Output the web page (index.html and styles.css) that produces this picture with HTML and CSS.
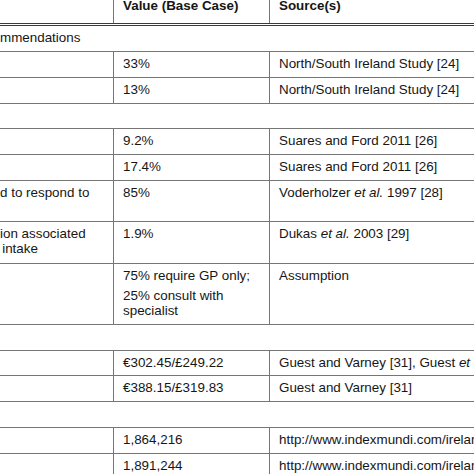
FILE: index.html
```html
<!DOCTYPE html>
<html>
<head>
<meta charset="utf-8">
<link rel="stylesheet" href="styles.css">
</head>
<body>
<div class="tbl">
  <div class="row head"><div class="c c1"></div><div class="c c2">Value (Base Case)</div><div class="c c3">Source(s)</div></div>
  <div class="sec">mmendations</div>
  <div class="row"><div class="c c1"></div><div class="c c2">33%</div><div class="c c3">North/South Ireland Study [24]</div></div>
  <div class="row"><div class="c c1"></div><div class="c c2">13%</div><div class="c c3">North/South Ireland Study [24]</div></div>
  <div class="sec">&nbsp;</div>
  <div class="row"><div class="c c1"></div><div class="c c2">9.2%</div><div class="c c3">Suares and Ford 2011 [26]</div></div>
  <div class="row"><div class="c c1"></div><div class="c c2">17.4%</div><div class="c c3">Suares and Ford 2011 [26]</div></div>
  <div class="row tall"><div class="c c1"><p>d to respond to</p><p>&nbsp;</p></div><div class="c c2">85%</div><div class="c c3">Voderholzer <i>et al.</i> 1997 [28]</div></div>
  <div class="row tall"><div class="c c1"><p>ion associated</p><p class="cut">e intake</p></div><div class="c c2">1.9%</div><div class="c c3">Dukas <i>et al.</i> 2003 [29]</div></div>
  <div class="row"><div class="c c1"></div><div class="c c2"><p class="para">75% require GP only;</p><p>25% consult with specialist</p></div><div class="c c3">Assumption</div></div>
  <div class="sec">&nbsp;</div>
  <div class="row"><div class="c c1"></div><div class="c c2">€302.45/£249.22</div><div class="c c3">Guest and Varney [31], Guest <i>et al.</i></div></div>
  <div class="row"><div class="c c1"></div><div class="c c2">€388.15/£319.83</div><div class="c c3">Guest and Varney [31]</div></div>
  <div class="sec">&nbsp;</div>
  <div class="row"><div class="c c1"></div><div class="c c2">1,864,216</div><div class="c c3">http://www.indexmundi.com/ireland/</div></div>
  <div class="row"><div class="c c1"></div><div class="c c2">1,891,244</div><div class="c c3">http://www.indexmundi.com/ireland/</div></div>
</div>
</body>
</html>
```
FILE: styles.css
```css
html, body {
  margin: 0;
  padding: 0;
  overflow: hidden;
  background: #fff;
}
body {
  width: 474px;
  height: 474px;
  font-family: "Liberation Sans", Arial, sans-serif;
  font-size: 13.4px;
  line-height: 14.75px;
  color: #161616;
}
p { margin: 0; }
.tbl {
  width: 669px;
  margin-top: -6.5px;
}
.row {
  display: grid;
  grid-template-columns: 113px 156px 400px;
  border-bottom: 1px solid #767676;
}
.c {
  padding: 5px 8px 5px 9px;
  white-space: nowrap;
}
.c1 { padding-left: 0; padding-right: 0; }
.c2, .c3 { border-left: 1px solid #767676; }
.head .c { padding-bottom: 10px; font-weight: bold; }
.row.head { border-bottom: 3px double #3a3a3a; }
.tall .c { padding-bottom: 6px; }
.para { margin-bottom: 5.9px; }
.c2 p { white-space: normal; width: 120px; }
.c2 .para { white-space: nowrap; }
.cut { text-indent: -9px; }
.sec {
  padding: 5px 0;
  border-bottom: 1px solid #767676;
}
i { font-style: italic; }
```
